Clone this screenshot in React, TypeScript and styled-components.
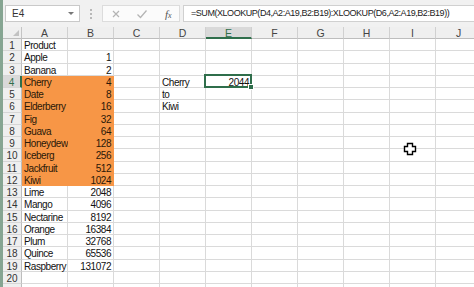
import React from 'react';
import styled, { createGlobalStyle, css } from 'styled-components';

const GREEN = '#2f6e4b';
const ORANGE = '#f79646';
const GRID = '#dadada';
const HEADER_BG = '#efefef';

const GlobalStyle = createGlobalStyle`
  html, body {
    margin: 0;
    padding: 0;
    background: #ffffff;
    overflow: hidden;
  }
`;

const Root = styled.div`
  position: relative;
  width: 474px;
  height: 287px;
  overflow: hidden;
  display: flex;
  flex-direction: column;
  border-left: 3px solid #86a592;
  box-sizing: border-box;
  background: #ffffff;
  font-family: 'Liberation Sans', Arial, sans-serif;
  color: #111;
`;

const FormulaBar = styled.div`
  flex: 0 0 27px;
  display: flex;
  align-items: flex-start;
  padding-top: 5px;
  box-sizing: border-box;
  background: #f1f1f1;
`;

const NameBox = styled.div`
  margin-left: 2px;
  width: 75px;
  height: 17px;
  box-sizing: border-box;
  border: 1px solid #c9c9c9;
  background: #ffffff;
  display: flex;
  align-items: center;
  justify-content: space-between;
  padding: 0 5px 0 6px;
  font-size: 10px;
  color: #333;
`;

const Caret = styled.span`
  width: 0;
  height: 0;
  border-left: 3px solid transparent;
  border-right: 3px solid transparent;
  border-top: 3px solid #777;
`;

const Dots = styled.div`
  width: 22px;
  height: 17px;
  display: flex;
  flex-direction: column;
  align-items: center;
  justify-content: center;
  gap: 2px;

  span {
    width: 2px;
    height: 2px;
    background: #b8b8b8;
  }
`;

const FxGroup = styled.div`
  width: 78px;
  height: 17px;
  box-sizing: border-box;
  border: 1px solid #dcdcdc;
  background: #fbfbfb;
  display: flex;
  align-items: center;
  padding-left: 8px;
  gap: 15px;
`;

const FxLabel = styled.span`
  font-family: 'Liberation Serif', 'Times New Roman', serif;
  font-style: italic;
  font-size: 11px;
  color: #555;
  margin-left: 2px;

  small {
    font-size: 8px;
  }
`;

const FormulaInput = styled.div`
  flex: 1;
  margin-left: 3px;
  height: 17px;
  box-sizing: border-box;
  border: 1px solid #d0d0d0;
  border-right: none;
  background: #ffffff;
  padding-left: 7px;
  font-size: 9px;
  letter-spacing: -0.45px;
  line-height: 15px;
  white-space: nowrap;
  color: #222;
`;

const Sheet = styled.div`
  flex: 1;
  display: grid;
  grid-template-columns: 19px repeat(10, 46px);
  grid-template-rows: 12px;
  grid-auto-rows: 12.25px;
  overflow: hidden;
`;

const Corner = styled.div`
  position: relative;
  background: ${HEADER_BG};
  border-right: 1px solid #c4c4c4;
  border-bottom: 1px solid #bdbdbd;

  &::after {
    content: '';
    position: absolute;
    right: 2px;
    bottom: 2px;
    width: 0;
    height: 0;
    border-left: 6px solid transparent;
    border-bottom: 6px solid #c2c2c2;
  }
`;

const ColHeader = styled.div<{ $selected?: boolean }>`
  background: ${HEADER_BG};
  border-right: 1px solid #d0d0d0;
  border-bottom: 1px solid #bdbdbd;
  font-size: 10.5px;
  line-height: 12px;
  text-align: center;
  color: #444;

  ${(p) =>
    p.$selected &&
    css`
      background: #d9d9d9;
      color: ${GREEN};
      border-bottom: 2px solid ${GREEN};
    `}
`;

const RowHeader = styled.div<{ $selected?: boolean }>`
  background: ${HEADER_BG};
  border-right: 1px solid #bdbdbd;
  border-bottom: 1px solid #d6d6d6;
  font-size: 10px;
  line-height: 14px;
  text-align: center;
  color: #333;
  white-space: nowrap;

  ${(p) =>
    p.$selected &&
    css`
      background: #d9d9d9;
      color: ${GREEN};
      border-right: 2px solid ${GREEN};
    `}
`;

const Cell = styled.div<{ $fill?: boolean; $right?: boolean; $active?: boolean }>`
  position: relative;
  border-right: 1px solid ${(p) => (p.$fill ? ORANGE : GRID)};
  border-bottom: 1px solid ${(p) => (p.$fill ? ORANGE : GRID)};
  background: ${(p) => (p.$fill ? ORANGE : '#ffffff')};
  padding: 0 2px;
  font-size: 10px;
  letter-spacing: -0.45px;
  line-height: 14px;
  white-space: nowrap;
  text-align: ${(p) => (p.$right ? 'right' : 'left')};
  color: ${(p) => (p.$fill ? '#2a1808' : '#111')};

  ${(p) =>
    p.$active &&
    css`
      z-index: 2;

      &::after {
        content: '';
        position: absolute;
        top: -2px;
        left: -2px;
        right: -1px;
        bottom: -1px;
        border: 2px solid ${GREEN};
      }
    `}
`;

const FillHandle = styled.span`
  position: absolute;
  right: -3px;
  bottom: -3px;
  width: 4px;
  height: 4px;
  background: ${GREEN};
  border: 1px solid #ffffff;
  z-index: 3;
`;

const Cursor = styled.svg`
  position: absolute;
  left: 400px;
  top: 142px;
  z-index: 5;
`;

const COLUMNS = ['A', 'B', 'C', 'D', 'E', 'F', 'G', 'H', 'I', 'J'];
const VISIBLE_ROWS = 20;

const FRUITS: [string, number][] = [
  ['Apple', 1],
  ['Banana', 2],
  ['Cherry', 4],
  ['Date', 8],
  ['Elderberry', 16],
  ['Fig', 32],
  ['Guava', 64],
  ['Honeydew', 128],
  ['Iceberg', 256],
  ['Jackfruit', 512],
  ['Kiwi', 1024],
  ['Lime', 2048],
  ['Mango', 4096],
  ['Nectarine', 8192],
  ['Orange', 16384],
  ['Plum', 32768],
  ['Quince', 65536],
  ['Raspberry', 131072],
];

const LOOKUP_LABELS: Record<number, string> = { 4: 'Cherry', 5: 'to', 6: 'Kiwi' };

const cellValue = (row: number, col: number): { text: string; right?: boolean } => {
  if (col === 0) {
    if (row === 1) return { text: 'Product' };
    const fruit = FRUITS[row - 2];
    return { text: fruit ? fruit[0] : '' };
  }
  if (col === 1) {
    const fruit = FRUITS[row - 2];
    return { text: fruit ? String(fruit[1]) : '', right: true };
  }
  if (col === 3) return { text: LOOKUP_LABELS[row] ?? '' };
  if (col === 4 && row === 4) return { text: '2044', right: true };
  return { text: '' };
};

const App = () => {
  const rows = Array.from({ length: VISIBLE_ROWS + 1 }, (_, i) => i + 1);

  return (
    <Root>
      <GlobalStyle />
      <FormulaBar>
        <NameBox>
          E4
          <Caret />
        </NameBox>
        <Dots>
          <span />
          <span />
          <span />
        </Dots>
        <FxGroup>
          <svg width="10" height="10" viewBox="0 0 10 10">
            <path d="M2 2 L8 8 M8 2 L2 8" stroke="#b4b4b4" strokeWidth="1.2" />
          </svg>
          <svg width="12" height="10" viewBox="0 0 12 10">
            <path d="M1.5 5.5 L4.5 8.5 L10.5 1.5" stroke="#b4b4b4" strokeWidth="1.3" fill="none" />
          </svg>
          <FxLabel>
            f<small>x</small>
          </FxLabel>
        </FxGroup>
        <FormulaInput>=SUM(XLOOKUP(D4,A2:A19,B2:B19):XLOOKUP(D6,A2:A19,B2:B19))</FormulaInput>
      </FormulaBar>
      <Sheet>
        <Corner />
        {COLUMNS.map((c) => (
          <ColHeader key={c} $selected={c === 'E'}>
            {c}
          </ColHeader>
        ))}
        {rows.map((row) => (
          <React.Fragment key={row}>
            <RowHeader $selected={row === 4}>{row <= VISIBLE_ROWS ? row : ''}</RowHeader>
            {COLUMNS.map((c, col) => {
              const { text, right } = cellValue(row, col);
              const fill = col <= 1 && row >= 4 && row <= 12;
              const active = col === 4 && row === 4;
              return (
                <Cell key={c} $fill={fill} $right={right} $active={active}>
                  {text}
                  {active && <FillHandle />}
                </Cell>
              );
            })}
          </React.Fragment>
        ))}
      </Sheet>
      <Cursor width="14" height="14" viewBox="0 0 14 14">
        <path
          d="M4.5 1.5 H9.5 V4.5 H12.5 V9.5 H9.5 V12.5 H4.5 V9.5 H1.5 V4.5 H4.5 Z"
          fill="#ffffff"
          stroke="#000000"
          strokeWidth="1.4"
        />
      </Cursor>
    </Root>
  );
};

export default App;
